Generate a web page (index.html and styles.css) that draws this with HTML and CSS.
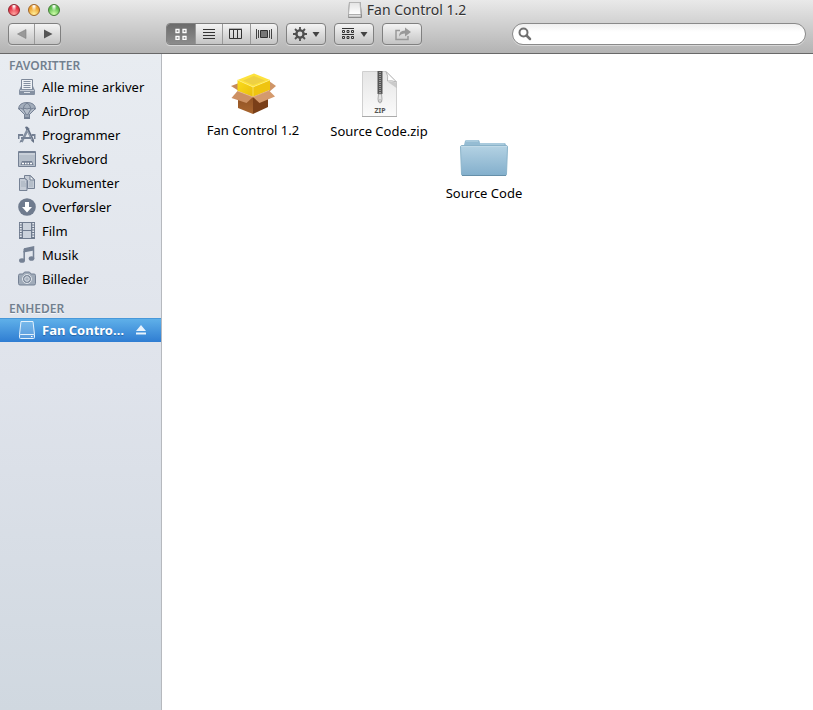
FILE: index.html
```html
<!DOCTYPE html>
<html lang="da">
<head>
<meta charset="utf-8">
<meta name="viewport" content="width=device-width, initial-scale=1">
<title>Fan Control 1.2</title>
<link rel="stylesheet" href="styles.css">
</head>
<body>
<div class="window">
  <header class="titlebar">
    <div class="title-row">
      <div class="lights">
        <button class="light light-close" type="button" aria-label="Luk"></button>
        <button class="light light-min" type="button" aria-label="Minimer"></button>
        <button class="light light-zoom" type="button" aria-label="Zoom"></button>
      </div>
      <h1 class="title">
        <svg class="title-icon" width="16" height="18" viewBox="0 0 16 18" aria-hidden="true">
          <defs><linearGradient id="disk" x1="0" y1="0" x2="0" y2="1"><stop offset="0" stop-color="#e4e4e4"/><stop offset="1" stop-color="#fff"/></linearGradient></defs>
          <path d="M2 1h11.500L15 14v2q0 1-1 1H2q-1 0-1-1v-2z" fill="#888"/>
          <path d="M2.500 1.500h10.500l1 12H1.500z" fill="url(#disk)" stroke="#b5b5b5"/>
          <path d="M1.500 13.500h12.500v2.500h-12.500z" fill="#dedede" stroke="#999" stroke-width=".6"/>
        </svg>
        <span>Fan Control 1.2</span>
      </h1>
    </div>
    <div class="toolbar">
      <div class="group nav">
        <button class="tool" type="button" aria-label="Tilbage"><svg width="10" height="10" viewBox="0 0 10 10"><path d="M9 .5v9L.5 5z" fill="#999" stroke="#808080" stroke-width=".6"/></svg></button>
        <button class="tool" type="button" aria-label="Frem"><svg width="10" height="10" viewBox="0 0 10 10"><path d="M1 .5v9L9.500 5z" fill="#555"/></svg></button>
      </div>
      <div class="group views">
        <button class="tool tool-on" type="button" aria-label="Symboler" aria-pressed="true"><svg width="12" height="12" viewBox="0 0 12 12"><path d="M1 1.500h3v3H1zM8 1.500h3v3H8zM1 8.500h3v3H1zM8 8.500h3v3H8z" fill="none" stroke="#fff" stroke-width="1.300"/></svg></button>
        <button class="tool" type="button" aria-label="Liste"><svg width="12" height="12" viewBox="0 0 12 12"><path d="M0 1.500h12M0 4.500h12M0 7.500h12M0 10.500h12" stroke="#333"/></svg></button>
        <button class="tool" type="button" aria-label="Kolonner"><svg width="14" height="12" viewBox="0 0 14 12"><path d="M.5 1.500h12v9H.5zM4.500 1v10M8.500 1v10" fill="none" stroke="#333"/><path d="M0 1.200h13" stroke="#333"/></svg></button>
        <button class="tool" type="button" aria-label="Cover Flow"><svg width="16" height="12" viewBox="0 0 16 12"><path d="M.5 1v10M2.500 2v8M13.500 2v8M15.500 1v10" stroke="#444"/><path d="M4.500 2.500h7v7h-7z" fill="#777" stroke="#333"/></svg></button>
      </div>
      <button class="tool tool-single" type="button" aria-label="Handling">
        <svg width="28" height="14" viewBox="0 0 28 14"><g stroke="#505050" stroke-width="1.800"><path d="M8 0v14M1 7h14M3 2l10 10M13 2L3 12"/></g><circle cx="8" cy="7" r="4.800" fill="#505050"/><circle cx="8" cy="7" r="2.400" fill="#ddd"/><path d="M20.500 5h7l-3.500 5z" fill="#444"/></svg>
      </button>
      <button class="tool tool-single" type="button" aria-label="Arranger">
        <svg width="28" height="14" viewBox="0 0 28 14"><path d="M2 1.500h12M2 7.500h12" stroke="#333"/><path d="M2.500 3.500h2v2h-2zM7 3.500h2v2H7zM11.500 3.500h2v2h-2zM2.500 9.500h2v2h-2zM7 9.500h2v2H7zM11.500 9.500h2v2h-2z" fill="none" stroke="#333"/><path d="M20.500 5h7l-3.500 5z" fill="#444"/></svg>
      </button>
      <button class="tool tool-single" type="button" aria-label="Del">
        <svg width="18" height="14" viewBox="0 0 18 14"><path d="M7 3.500H3v9h12V9" fill="none" stroke="#999" stroke-width="1.500"/><path d="M6 9.500Q6 3.500 12 3.500V.5l6 4.500-6 4.500v-3q-4 0-6 3z" fill="#999"/></svg>
      </button>
      <label class="search">
        <svg width="14" height="14" viewBox="0 0 14 14" aria-hidden="true"><circle cx="5.500" cy="5.500" r="4" fill="none" stroke="#707070" stroke-width="2"/><path d="M8.500 8.500l3.500 3.500" stroke="#707070" stroke-width="2.500" stroke-linecap="round"/></svg>
        <input class="search-input" type="text" aria-label="Søg">
      </label>
    </div>
  </header>

  <div class="body">
    <nav class="sidebar" aria-label="Indholdsoversigt">
      <h2 class="heading">FAVORITTER</h2>
      <ul class="places">
        <li><a class="place" href="#"><svg class="ico" viewBox="0 0 18 18"><path d="M3.500 1.500h11v10h-11z" fill="#eef1f5" stroke="#7d8899"/><path d="M5.500 3.500h7M5.500 5.500h7M5.500 7.500h7M5.500 9.500h7" stroke="#8490a1"/><path d="M3 8L1 12.500V16q0 1 1 1h14q1 0 1-1v-3.500L15 8v3H3z" fill="#8591a2"/><path d="M2 12.500h14" stroke="#c5ccd6"/><path d="M6 14.500h6" stroke="#dfe4ea"/></svg><span>Alle mine arkiver</span></a></li>
        <li><a class="place" href="#"><svg class="ico" viewBox="0 0 18 18"><path d="M.5 7Q1 .5 9 .5T17.500 7L11 13H7z" fill="#b4bdc9"/><path d="M.5 7Q1 .5 9 .5T17.500 7Q16 5.500 13 7q-2-1.500-4 0-2-1.500-4 0-3-1.500-4.500 0z" fill="#a3aebc" stroke="#758194"/><path d="M5 7Q6 2 9 1q3 1 4 6M1 7l6 6M17 7l-6 6M5 7l3.500 6M13 7l-3.500 6" fill="none" stroke="#758194"/><path d="M6 12.500h6V17H6z" fill="#758194"/><path d="M7 14h4" stroke="#bcc4cf"/></svg><span>AirDrop</span></a></li>
        <li><a class="place" href="#"><svg class="ico" viewBox="0 0 18 18"><path d="M10.500 2L3.500 16" stroke="#8490a1" stroke-width="2.600"/><path d="M7 1q1.500-1 3 0l6 13v3l-2.500-2z" fill="#667286"/><path d="M9 4l5 10" stroke="#b7c0cc" stroke-width=".8"/><path d="M0 8h5v2H1.500v3H0zM13.500 8h4v5H16v-3h-2zM3 11h10v2H3z" fill="#758194"/><path d="M2.500 14l-1 3 3-2" fill="#758194"/></svg><span>Programmer</span></a></li>
        <li><a class="place" href="#"><svg class="ico" viewBox="0 0 18 18"><path d="M.5 1.500h17v15H.5z" fill="#b6bfca" stroke="#758194"/><path d="M1 2.500h16" stroke="#758194"/><path d="M1 4h16" stroke="#dce1e8"/><path d="M4 11h10l1.500 4h-13z" fill="#758194"/><path d="M4 13.500h2M7 13.500h1.500M9.500 13.500H11M12 13.500h2" stroke="#fff" stroke-width="1.500"/></svg><span>Skrivebord</span></a></li>
        <li><a class="place" href="#"><svg class="ico" viewBox="0 0 18 18"><path d="M1.500 4.500H7l2 2v10H1.500z" fill="#c5ccd6" stroke="#758194"/><path d="M6.500 1.500h6l4 4v9h-7v-8l-3-2.500z" fill="#c5ccd6" stroke="#758194"/><path d="M12 1.500v4.500h4.500z" fill="#f1f4f7" stroke="#758194"/><path d="M3 8h4M3 10h5M3 12h5M11 8h4M11 10h4M11 12h4" stroke="#9aa5b3" stroke-width=".7"/></svg><span>Dokumenter</span></a></li>
        <li><a class="place" href="#"><svg class="ico" viewBox="0 0 18 18"><circle cx="9" cy="9" r="8.800" fill="#6f7b8e"/><path d="M7 4h4v5h3l-5 5.500L4 9h3z" fill="#fff"/></svg><span>Overførsler</span></a></li>
        <li><a class="place" href="#"><svg class="ico" viewBox="0 0 18 18"><path d="M1 0h16v17H1z" fill="#6f7b8e"/><path d="M5 1h8v7H5zM5 9h8v7H5z" fill="#cbd2dc"/><path d="M2.800 1v15M15.200 1v15" stroke="#e4e8ee" stroke-width="1.800" stroke-dasharray="1.500 1"/></svg><span>Film</span></a></li>
        <li><a class="place" href="#"><svg class="ico" viewBox="0 0 18 18"><path d="M6 3l9.500-2v12" fill="none" stroke="#758194" stroke-width="1.500"/><path d="M5.500 3L16 1v3.500L5.500 6.500z" fill="#758194"/><path d="M6.200 5v9" stroke="#758194" stroke-width="1.500"/><ellipse cx="4" cy="14.500" rx="3" ry="2.300" fill="#758194"/><ellipse cx="13.500" cy="12.500" rx="2.800" ry="2.300" fill="#758194"/></svg><span>Musik</span></a></li>
        <li><a class="place" href="#"><svg class="ico" viewBox="0 0 18 18"><path d="M2 4h3l1.500-2h5L13 4h3q1.500 0 1.500 1.500v8q0 1.500-1.500 1.500H2Q.5 15 .5 13.500v-8Q.5 4 2 4z" fill="#a0abb9" stroke="#758194"/><circle cx="9" cy="9" r="4.500" fill="#7c889a" stroke="#e2e7ed"/><circle cx="9" cy="9" r="2.300" fill="#a7b1bf" stroke="#dce2e9"/></svg><span>Billeder</span></a></li>
      </ul>
      <h2 class="heading heading-next">ENHEDER</h2>
      <ul class="places">
        <li class="device">
          <a class="place place-on" href="#"><svg class="ico" viewBox="0 0 18 18"><path d="M3 .5h12l1.500 13v3q0 1-1 1h-13q-1 0-1-1v-3z" fill="#fff" fill-opacity=".18" stroke="#e3f1fc"/><path d="M1.500 14Q2 13.500 3 13.500h12q1 0 1.500.5" fill="none" stroke="#e3f1fc"/><path d="M13 15.500h1.500" stroke="#fff"/></svg><span>Fan Contro…</span></a>
          <button class="eject" type="button" aria-label="Skub ud"><svg width="12" height="11" viewBox="0 0 12 11"><path d="M6 0l5 6H1zM1 7.500h10v2H1z" fill="#e8f3fd"/></svg></button>
        </li>
      </ul>
    </nav>

    <main class="canvas">
      <figure class="file file-box">
        <svg width="48" height="48" viewBox="0 0 48 48" aria-hidden="true">
          <defs>
            <linearGradient id="carton" x1="0" y1="0" x2="0" y2="1"><stop offset="0" stop-color="#8a4c20"/><stop offset="1" stop-color="#a9662f"/></linearGradient>
            <linearGradient id="cover" x1="0" y1="0" x2="1" y2="1"><stop offset="0" stop-color="#fbdc1c"/><stop offset="1" stop-color="#e9be0c"/></linearGradient>
          </defs>
          <path d="M9 23l15 5v17L9 39z" fill="url(#carton)"/>
          <path d="M24 28l15-6v16l-15 7z" fill="#7a3f18"/>
          <path d="M2 17l8-3v8z" fill="#c58a5c"/>
          <path d="M40 12l7 5-7 6z" fill="#cf9568"/>
          <path d="M8.500 11v11l15.500 6V18z" fill="url(#cover)"/>
          <path d="M24 18v10l17-7V11z" fill="#efc410"/>
          <path d="M8.500 11L25 4.500 41 11l-17 7z" fill="#fde23c"/>
          <path d="M14 11.500L25 7l11 4.500L24 16z" fill="#e8c945" opacity=".75"/>
          <path d="M8.500 11L24 18l17-7M24 18v9.500" fill="none" stroke="#fff08a" stroke-width=".6"/>
          <path d="M8.500 22L24 28l-6.500 6-15-5z" fill="#cc9063"/>
          <path d="M24 28l16-6.500 6 6L30.500 34z" fill="#d49a6d"/>
          <path d="M8.500 22L24 28l16-6.500" fill="none" stroke="#e7b98c" stroke-width=".7"/>
        </svg>
        <figcaption>Fan Control 1.2</figcaption>
      </figure>
      <figure class="file file-zip">
        <svg width="48" height="48" viewBox="0 0 48 48" aria-hidden="true">
          <defs><linearGradient id="sheet" x1="0" y1="0" x2="0" y2="1"><stop offset="0" stop-color="#e5e5e5"/><stop offset="1" stop-color="#fbfbfb"/></linearGradient></defs>
          <path d="M7.500 1.500H31L41.500 12v34.500h-34z" fill="url(#sheet)" stroke="#d0d0d0"/>
          <path d="M7 46.500h35" stroke="#aaa"/>
          <path d="M33 12q5-1 8.500 1v5z" fill="#999" opacity=".4"/>
          <path d="M31 1.500L41.500 12q-5-2-9-1 1-5-1.500-9.500z" fill="#fff" stroke="#aaa" stroke-width=".8"/>
          <path d="M22.500 1h5v23h-5z" fill="#555"/>
          <path d="M25 2v22" stroke="#999" stroke-width="2" stroke-dasharray="1 1"/>
          <path d="M23.500 24h3l.5 5q0 4-2 4t-2-4z" fill="#e4e4e4" stroke="#999" stroke-width=".8"/>
          <circle cx="25" cy="30.500" r="1" fill="#fff" stroke="#999" stroke-width=".6"/>
          <text class="zip-text" x="25" y="43" text-anchor="middle">ZIP</text>
        </svg>
        <figcaption>Source Code.zip</figcaption>
      </figure>
      <figure class="file file-folder">
        <svg width="48" height="48" viewBox="0 0 48 48" aria-hidden="true">
          <defs><linearGradient id="folder" x1="0" y1="0" x2="0" y2="1"><stop offset="0" stop-color="#b4d2e3"/><stop offset="1" stop-color="#83afcc"/></linearGradient></defs>
          <path d="M3 17L5 9q.5-1 1.500-1H18q1 0 1.500 1l.5 2h24q2 0 2 2v5H3z" fill="#95bcd3"/>
          <path d="M6 9h12M20 12h24" stroke="#bdd8e6"/>
          <path d="M.500 15q0-1.500 1.500-1.500h44q1.500 0 1.500 1.500L46.500 42q0 1.500-1.500 1.500H3Q1.500 43.500 1.500 42z" fill="url(#folder)" stroke="#8ab3ca"/>
          <path d="M1 14.500h46" stroke="#c0d9e7"/>
          <path d="M2 43.500h44" stroke="#658fa9"/>
        </svg>
        <figcaption>Source Code</figcaption>
      </figure>
    </main>
  </div>
</div>
</body>
</html>
```
FILE: styles.css
```css
* {
  box-sizing: border-box;
}

body {
  margin: 0;
  font-family: "Noto Sans", "Open Sans", sans-serif;
  font-size: 13px;
  line-height: 18px;
  color: #000;
  background: #fff;
}

h1, h2, ul, figure {
  margin: 0;
  padding: 0;
}

ul {
  list-style: none;
}

button {
  margin: 0;
  padding: 0;
  border: 0;
  background: none;
}

svg {
  display: block;
  flex: none;
}

.window {
  display: flex;
  flex-direction: column;
  min-height: 100vh;
}

/* Title bar and toolbar */
.titlebar {
  border-bottom: 1px solid #686868;
  background: linear-gradient(#e9e9e9, #b3b3b3);
  padding-bottom: 8px;
}

.title-row {
  display: grid;
  grid-template-columns: 1fr auto 1fr;
  align-items: center;
  height: 20px;
  padding: 0 8px;
  margin-bottom: 3px;
}

.lights {
  display: flex;
  gap: 8px;
}

.light {
  width: 12px;
  height: 12px;
  border-radius: 50%;
  border: 1px solid;
}

.light-close {
  border-color: #8f2730;
  background: radial-gradient(ellipse at 50% 10%, #fff 5%, transparent 40%), radial-gradient(circle at 50% 90%, #ffa7a2, #e32e40 65%);
}

.light-min {
  border-color: #a06427;
  background: radial-gradient(ellipse at 50% 10%, #fff 5%, transparent 40%), radial-gradient(circle at 50% 90%, #fff09a, #eda02c 65%);
}

.light-zoom {
  border-color: #467c38;
  background: radial-gradient(ellipse at 50% 10%, #fff 5%, transparent 40%), radial-gradient(circle at 50% 90%, #d2ffab, #5bbd4c 65%);
}

.title {
  display: flex;
  align-items: center;
  gap: 4px;
  font-size: 14px;
  font-weight: 400;
  color: #333;
  text-shadow: 0 1px 0 #f4f4f4;
}

.toolbar {
  display: flex;
  gap: 8px;
  padding: 0 7px 0 8px;
}

.group,
.tool-single {
  height: 22px;
  border: 1px solid #808080;
  border-radius: 4px;
  background: linear-gradient(#f4f4f4, #c4c4c4);
  box-shadow: 0 1px 0 #d8d8d8;
}

.group {
  display: flex;
  overflow: hidden;
}

.tool {
  display: flex;
  align-items: center;
  justify-content: center;
}

.group .tool {
  flex: 1;
}

.group .tool + .tool {
  border-left: 1px solid #999;
}

.nav {
  width: 53px;
}

.views {
  width: 112px;
  margin-left: 97px;
}

.group .tool-on {
  flex: 0 0 28px;
  background: linear-gradient(#6c6c6c, #8c8c8c);
}

.tool-single {
  width: 40px;
}

.search {
  display: flex;
  align-items: center;
  flex: 1;
  height: 22px;
  margin-left: 82px;
  padding: 0 5px;
  border: 1px solid #8a8a8a;
  border-radius: 11px;
  background: linear-gradient(#f0f0f0, #fff 40%);
  box-shadow: 0 1px 0 #d8d8d8;
}

.search-input {
  flex: 1;
  min-width: 0;
  border: 0;
  outline: 0;
  background: none;
  font: inherit;
}

/* Sidebar */
.body {
  display: flex;
  flex: 1;
}

.sidebar {
  flex: none;
  width: 162px;
  border-right: 1px solid #b6b9be;
  background: linear-gradient(#e8ecf1, #dfe3eb 50%, #d0d8e0);
}

.heading {
  padding: 3px 9px 0;
  font-size: 12px;
  font-weight: 600;
  color: #72808f;
  text-shadow: 0 1px 0 #f4f6f9;
}

.heading-next {
  margin-top: 6px;
}

.place {
  display: flex;
  flex: 1;
  align-items: center;
  gap: 6px;
  height: 24px;
  padding-left: 18px;
  color: #000;
  white-space: nowrap;
  text-decoration: none;
}

.ico {
  width: 18px;
  height: 18px;
}

.device {
  display: flex;
  align-items: center;
  padding-right: 14px;
  background: linear-gradient(#4798da 1px, #5fb0e9 1px, #2f7dd2);
}

.place-on {
  color: #fff;
  font-weight: 700;
  text-shadow: 0 1px 1px #2463a5;
}

/* Files, placed freely by the user */
.canvas {
  position: relative;
  flex: 1;
  background: #fff;
}

.file {
  position: absolute;
  display: flex;
  flex-direction: column;
  align-items: center;
  gap: 4px;
  width: 120px;
  text-align: center;
}

.file-box {
  left: 31px;
  top: 15px;
}

.file-zip {
  left: 157px;
  top: 16px;
}

.file-folder {
  left: 262px;
  top: 78px;
}

.zip-text {
  font-size: 7px;
  font-weight: 700;
  fill: #555;
}
```
